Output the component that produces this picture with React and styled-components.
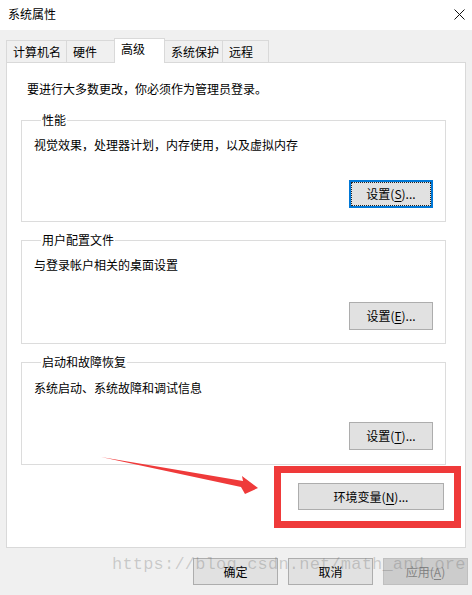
import React from "react";
import styled, { createGlobalStyle, css } from "styled-components";

const Global = createGlobalStyle`
  html, body { margin: 0; padding: 0; background: #f0f0f0; }
  body {
    font-family: "Noto Sans CJK SC", "Microsoft YaHei", "Noto Sans", sans-serif;
    font-size: 12px;
    color: #000;
  }
  #root { width: 472px; height: 595px; overflow: hidden; }
`;

const Window = styled.div`
  position: relative;
  width: 472px;
  height: 595px;
  background: #f0f0f0;
  display: flex;
  flex-direction: column;
  overflow: hidden;
`;

const TitleBar = styled.div`
  height: 30px;
  box-sizing: border-box;
  background: #fff;
  display: flex;
  align-items: center;
  justify-content: space-between;
  padding: 0 7px 2px 8px;
`;

const Title = styled.div`
  line-height: 16px;
  font-size: 12px;
`;

const Body = styled.div`
  padding: 8px 6px 0 6px;
  display: flex;
  flex-direction: column;
`;

const TabRow = styled.div`
  display: flex;
  align-items: flex-end;
  height: 24px;
`;

const Tab = styled.div`
  box-sizing: border-box;
  width: ${(p) => p.$w}px;
  height: 22px;
  padding: 1px 0 0 6px;
  display: flex;
  align-items: center;
  border: 1px solid #d9d9d9;
  border-bottom: none;
  background: #f0f0f0;
  line-height: 16px;
  white-space: nowrap;
  & + & { margin-left: -1px; }
  ${(p) =>
    p.$active &&
    css`
      height: 25px;
      margin-bottom: -1px;
      padding: 0 0 4px 6px;
      background: #fff;
      position: relative;
      z-index: 1;
    `}
`;

const Panel = styled.div`
  background: #fff;
  border: 1px solid #d9d9d9;
  padding: 18px 19px 19px 14px;
  display: flex;
  flex-direction: column;
`;

const Intro = styled.div`
  line-height: 16px;
  margin-left: 6px;
  margin-bottom: 15px;
`;

const Group = styled.fieldset`
  margin: 0;
  padding: 0 12px ${(p) => p.$pb ?? 13}px 12px;
  border: 1px solid #dcdcdc;
  display: flex;
  flex-direction: column;
  min-inline-size: 0;
  & + & { margin-top: ${(p) => p.$gap ?? 9}px; }
`;

const Legend = styled.legend`
  padding: 0 1px;
  margin-left: 7px;
  line-height: 16px;
`;

const Desc = styled.div`
  line-height: 16px;
  margin-top: ${(p) => p.$mt ?? 9}px;
`;

const ButtonRow = styled.div`
  display: flex;
  justify-content: flex-end;
  margin-top: ${(p) => p.$mt ?? 0}px;
`;

const Button = styled.div`
  box-sizing: border-box;
  width: ${(p) => p.$w}px;
  height: ${(p) => p.$h}px;
  display: flex;
  align-items: center;
  justify-content: center;
  background: #e1e1e1;
  border: 1px solid #adadad;
  line-height: 16px;
  white-space: nowrap;
  ${(p) =>
    p.$focused &&
    css`
      border: 2px solid #0078d7;
      outline: 1px dotted #222;
      outline-offset: -3px;
    `}
  ${(p) =>
    p.$disabled &&
    css`
      background: #cccccc;
      border-color: #bfbfbf;
      color: #838383;
    `}
  u { text-decoration: underline; text-underline-offset: 2px; }
`;

const EnvRow = styled.div`
  display: flex;
  justify-content: flex-end;
  margin-right: -15px;
  margin-top: 1px;
`;

const RedFrame = styled.div`
  border: 7px solid #ef3a3a;
  padding: 10px 10px 11px 17px;
  width: 146px;
`;

const Footer = styled.div`
  display: flex;
  justify-content: flex-end;
  gap: 10px;
  margin-top: 10px;
  margin-right: -2px;
`;

const Watermark = styled.div`
  position: absolute;
  left: 112px;
  top: 555px;
  line-height: 20px;
  font-family: "Liberation Mono", "Courier New", monospace;
  font-size: 17px;
  letter-spacing: 0.2px;
  color: rgba(100, 100, 100, 0.28);
  white-space: nowrap;
  pointer-events: none;
  z-index: 5;
`;

const Arrow = styled.svg`
  position: absolute;
  left: 95px;
  top: 450px;
  width: 170px;
  height: 50px;
  pointer-events: none;
  z-index: 5;
`;

export default function App() {
  return (
    <>
      <Global />
      <Window>
        <TitleBar>
          <Title>系统属性</Title>
          <svg width="11" height="11" viewBox="0 0 11 11">
            <path d="M0.5 0.5 L10.5 10.5 M10.5 0.5 L0.5 10.5" stroke="#111" strokeWidth="1" fill="none" />
          </svg>
        </TitleBar>
        <Body>
          <TabRow>
            <Tab $w={61}>计算机名</Tab>
            <Tab $w={49}>硬件</Tab>
            <Tab $w={51} $active>高级</Tab>
            <Tab $w={59}>系统保护</Tab>
            <Tab $w={47}>远程</Tab>
          </TabRow>
          <Panel>
            <Intro>要进行大多数更改，你必须作为管理员登录。</Intro>
            <Group>
              <Legend>性能</Legend>
              <Desc>视觉效果，处理器计划，内存使用，以及虚拟内存</Desc>
              <ButtonRow $mt={27}>
                <Button $w={84} $h={28} $focused>
                  设置(<u>S</u>)...
                </Button>
              </ButtonRow>
            </Group>
            <Group $gap={9}>
              <Legend>用户配置文件</Legend>
              <Desc>与登录帐户相关的桌面设置</Desc>
              <ButtonRow $mt={29}>
                <Button $w={84} $h={28}>
                  设置(<u>E</u>)...
                </Button>
              </ButtonRow>
            </Group>
            <Group $gap={10} $pb={14}>
              <Legend>启动和故障恢复</Legend>
              <Desc $mt={10}>系统启动、系统故障和调试信息</Desc>
              <ButtonRow $mt={26}>
                <Button $w={84} $h={28}>
                  设置(<u>T</u>)...
                </Button>
              </ButtonRow>
            </Group>
            <EnvRow>
              <RedFrame>
                <Button $w={146} $h={27}>
                  环境变量(<u>N</u>)...
                </Button>
              </RedFrame>
            </EnvRow>
          </Panel>
          <Footer>
            <Button $w={85} $h={27}>确定</Button>
            <Button $w={85} $h={27}>取消</Button>
            <Button $w={85} $h={27} $disabled>
              应用(<u>A</u>)
            </Button>
          </Footer>
        </Body>
        <Arrow viewBox="0 0 170 50">
          <polygon points="6,7 148,31 147,26 163,38 150,44 146,37" fill="#ef3a3a" />
        </Arrow>
        <Watermark>https://blog.csdn.net/math_and_ore</Watermark>
      </Window>
    </>
  );
}
